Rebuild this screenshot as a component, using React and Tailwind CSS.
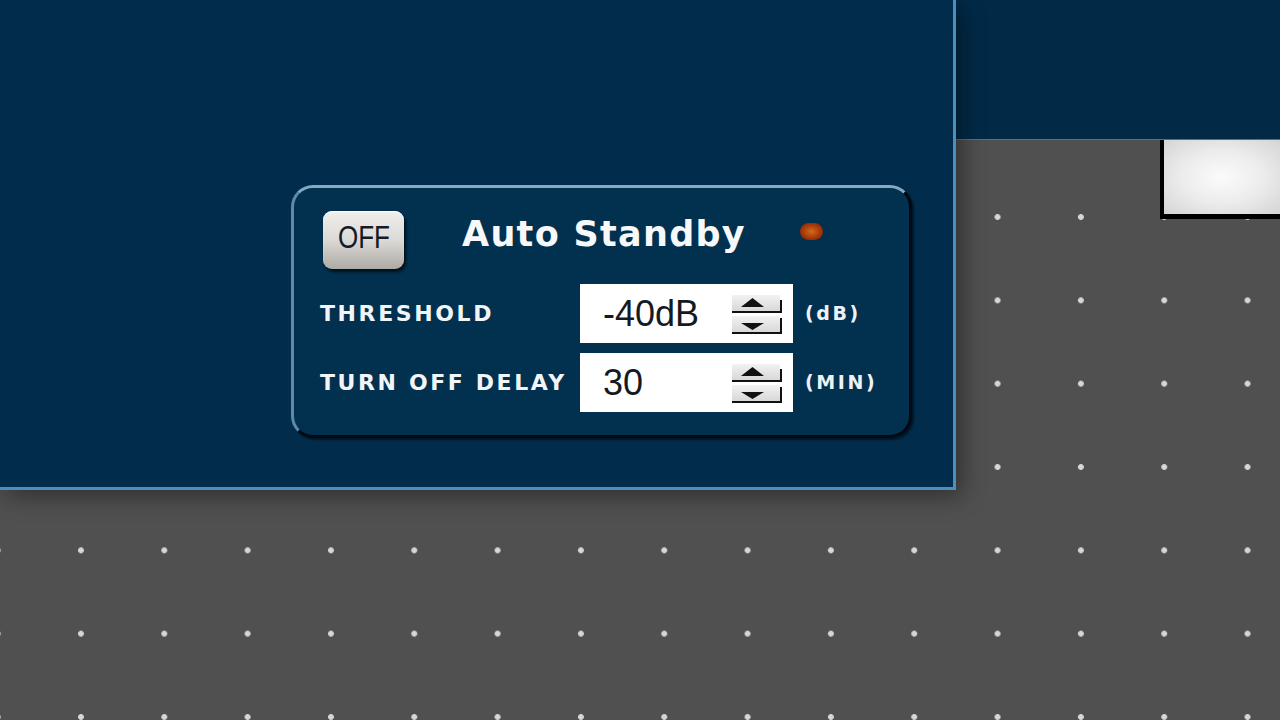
import React from "react";

function Spinner() {
  return (
    <svg width="50" height="44" viewBox="0 0 50 44" className="shrink-0">
      <defs>
        <linearGradient id="sg" x1="0" y1="0" x2="0" y2="1">
          <stop offset="0" stopColor="#f2f2f2" />
          <stop offset="1" stopColor="#d6d6d6" />
        </linearGradient>
      </defs>
      <rect x="0" y="2" width="48" height="17" fill="url(#sg)" />
      <polygon points="9,14 32,14 20.5,5" fill="#111" />
      <line x1="0" y1="19" x2="50" y2="19" stroke="#111" strokeWidth="2" />
      <line x1="49" y1="7" x2="49" y2="20" stroke="#111" strokeWidth="2" />
      <rect x="0" y="23" width="48" height="17" fill="url(#sg)" />
      <polygon points="9,30 32,30 20.5,37" fill="#111" />
      <line x1="0" y1="40" x2="50" y2="40" stroke="#111" strokeWidth="2" />
      <line x1="49" y1="25" x2="49" y2="41" stroke="#111" strokeWidth="2" />
    </svg>
  );
}

function Row({ label, value, unit, className }) {
  return (
    <div className={"flex items-center " + className}>
      <div className="w-[260px] shrink-0 text-[22px] font-bold tracking-[2.6px] text-[#f2f5f8] leading-none font-['DejaVu_Sans',sans-serif]">
        {label}
      </div>
      <div className="w-[213px] h-[59px] bg-white flex items-center shrink-0">
        <span className="pl-[23px] text-[36px] leading-none text-[#141a22] font-['Liberation_Sans',Arial,sans-serif]">
          {value}
        </span>
        <div className="ml-auto mr-[11px] self-start mt-[9px]">
          <Spinner />
        </div>
      </div>
      <div className="ml-[12px] text-[19px] font-bold tracking-[2.6px] text-[#eef2f6] leading-none font-['DejaVu_Sans',sans-serif]">
        {unit}
      </div>
    </div>
  );
}

export default function App() {
  return (
    <div className="w-[1280px] h-[720px] overflow-hidden relative bg-[#505050] bg-[radial-gradient(circle,#d6d6d6_2.6px,transparent_3.2px)] bg-[length:83.33px_83.33px] bg-[position:39.3px_8.7px]">
      <div className="flex">
        <div className="w-[956px] h-[490px] shrink-0 bg-[#022c4b] border-r-[3px] border-b-[3px] border-[#4b8fbd] shadow-[6px_6px_22px_rgba(0,0,0,0.4)] pt-[185px] pl-[291px] relative z-10">
          <div className="w-[621px] h-[253px] rounded-[22px] border-[3px] border-t-[#86a9c0] border-l-[#5f8aa7] border-r-[#000a14] border-b-[#000a14] bg-[#02304f] pt-[23px] pl-[26px] shadow-[2px_2px_2px_rgba(0,0,0,0.5)]">
            <div className="flex items-center h-[58px]">
              <div className="ml-[3px] w-[81px] h-[58px] rounded-[9px] bg-gradient-to-b from-[#f0efec] via-[#dcdad6] to-[#aeaaa5] shadow-[2px_3px_3px_rgba(0,0,0,0.65),inset_0_1px_1px_rgba(255,255,255,0.9)] flex items-center justify-center">
                <span className="text-[31px] leading-none text-[#141a26] scale-x-[0.84] -mt-[6px] font-['Liberation_Sans',Arial,sans-serif]">
                  OFF
                </span>
              </div>
              <div className="ml-[58px] w-[338px] shrink-0 -mt-[12px] text-[35px] font-bold leading-none tracking-[1.3px] text-[#f6f8fa] font-['DejaVu_Sans',Verdana,sans-serif]">
                Auto Standby
              </div>
              <div className="w-[23px] h-[17px] -mt-[18px] rounded-full bg-[radial-gradient(ellipse_at_center,#d26a18_0%,#a8380a_55%,#6a1a06_100%)]" />
            </div>
            <Row label="THRESHOLD" value="-40dB" unit="(dB)" className="mt-[15px]" />
            <Row label="TURN OFF DELAY" value="30" unit="(MIN)" className="mt-[10px]" />
          </div>
        </div>
        <div className="flex-1 flex flex-col">
          <div className="h-[140px] bg-[#022a47] border-b border-[#666c72]" />
          <div className="flex justify-end">
            <div className="w-[120px] h-[79px] border-l-[4px] border-b-[5px] border-black bg-[radial-gradient(ellipse_at_center,#fbfbfb_0%,#ececec_50%,#d4d4d4_100%)]" />
          </div>
        </div>
      </div>
    </div>
  );
}
